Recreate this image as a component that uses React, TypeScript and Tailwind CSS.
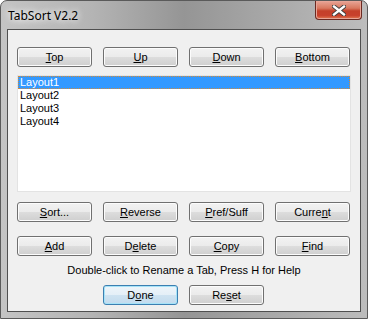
import React from 'react';

// Win7 classic-ish dialog: TabSort V2.2

type Btn = { pre: string; key: string; post: string; def?: boolean };

const ROW1: Btn[] = [
  { pre: '', key: 'T', post: 'op' },
  { pre: '', key: 'U', post: 'p' },
  { pre: '', key: 'D', post: 'own' },
  { pre: '', key: 'B', post: 'ottom' },
];
const ROW2: Btn[] = [
  { pre: '', key: 'S', post: 'ort...' },
  { pre: '', key: 'R', post: 'everse' },
  { pre: '', key: 'P', post: 'ref/Suff' },
  { pre: 'Curre', key: 'n', post: 't' },
];
const ROW3: Btn[] = [
  { pre: '', key: 'A', post: 'dd' },
  { pre: 'D', key: 'e', post: 'lete' },
  { pre: '', key: 'C', post: 'opy' },
  { pre: '', key: 'F', post: 'ind' },
];

const ITEMS = ['Layout1', 'Layout2', 'Layout3', 'Layout4'];

function WinButton({ b }: { b: Btn }) {
  return (
    <button
      className={`w-[75px] h-[20px] rounded-[3px] border text-[11px] leading-none text-black flex items-center justify-center ${
        b.def
          ? 'border-[#3c7fb1] shadow-[inset_0_0_0_1px_#a6e3f8] bg-[linear-gradient(#eef5fa_0%,#e4eff7_50%,#cfe3f1_50%,#c2dbee_100%)]'
          : 'border-[#707070] shadow-[inset_0_0_0_1px_#fcfcfc] bg-[linear-gradient(#f2f2f2_0%,#ebebeb_50%,#dddddd_50%,#cfcfcf_100%)]'
      }`}
      style={{ fontFamily: '"Liberation Sans", Arial, sans-serif' }}
    >
      <span>
        {b.pre}
        <u className="underline-offset-[1px]">{b.key}</u>
        {b.post}
      </span>
    </button>
  );
}

function ButtonRow({ items }: { items: Btn[] }) {
  return (
    <div className="flex gap-[11px]">
      {items.map((b) => (
        <WinButton key={b.pre + b.key + b.post} b={b} />
      ))}
    </div>
  );
}

export default function App() {
  return (
    <div className="w-[368px] h-[319px] overflow-hidden bg-white">
      <div className="w-[368px] h-[319px] rounded-t-[7px] border border-[#5a5a5a] flex flex-col bg-[linear-gradient(90deg,#c4c4c4_0%,#b4b4b4_25%,#959595_50%,#a9a9a9_75%,#bdbdbd_100%)]">
        {/* Title bar */}
        <div className="h-[28px] flex items-start justify-between shrink-0">
          <div
            className="pl-[7px] pt-[6px] text-[12px] text-black [text-shadow:0_0_8px_#ffffff,0_0_6px_#ffffff]"
            style={{ fontFamily: '"Noto Sans", "Open Sans", sans-serif' }}
          >
            TabSort V2.2
          </div>
          <div className="mr-[5px] w-[47px] h-[19px] rounded-b-[4px] border border-t-0 border-[#6b2a22] shadow-[inset_0_0_0_1px_#e8a597] bg-[linear-gradient(#e8a597_0%,#d8785f_40%,#c4402a_55%,#c7402c_80%,#e07a52_100%)] flex items-center justify-center">
            <svg width="14" height="11" viewBox="0 0 14 11">
              <path
                d="M2 1.5 L12 9.5 M12 1.5 L2 9.5"
                stroke="#3d3d3d"
                strokeWidth="4.2"
                strokeLinecap="square"
              />
              <path
                d="M2 1.5 L12 9.5 M12 1.5 L2 9.5"
                stroke="#ffffff"
                strokeWidth="2.3"
                strokeLinecap="square"
              />
            </svg>
          </div>
        </div>

        {/* Client area */}
        <div className="mx-[6px] h-[283px] border border-[#4f4f4f] bg-[#f0f0f0] flex flex-col px-[9px] pt-[17px]">
          <ButtonRow items={ROW1} />

          <div
            className="mt-[8px] w-[334px] h-[117px] bg-white border border-[#e3e3e3] text-[11px] leading-[13px] text-black"
            style={{ fontFamily: '"Liberation Sans", Arial, sans-serif' }}
          >
            {ITEMS.map((it, i) => (
              <div
                key={it}
                className={`h-[13px] pl-[2px] ${
                  i === 0
                    ? 'bg-[#3399ff] text-white outline-1 outline-dotted outline-[#d08a3a] -outline-offset-1'
                    : ''
                }`}
              >
                {it}
              </div>
            ))}
          </div>

          <div className="mt-[10px]">
            <ButtonRow items={ROW2} />
          </div>
          <div className="mt-[14px]">
            <ButtonRow items={ROW3} />
          </div>

          <div
            className="mt-[8px] h-[13px] w-[334px] text-center text-[11px] leading-[13px] text-black"
            style={{ fontFamily: '"Liberation Sans", Arial, sans-serif' }}
          >
            Double-click to Rename a Tab, Press H for Help
          </div>

          <div className="mt-[8px] flex gap-[11px] pl-[86px]">
            <WinButton b={{ pre: 'D', key: 'o', post: 'ne', def: true }} />
            <WinButton b={{ pre: 'Re', key: 's', post: 'et' }} />
          </div>
        </div>
      </div>
    </div>
  );
}
